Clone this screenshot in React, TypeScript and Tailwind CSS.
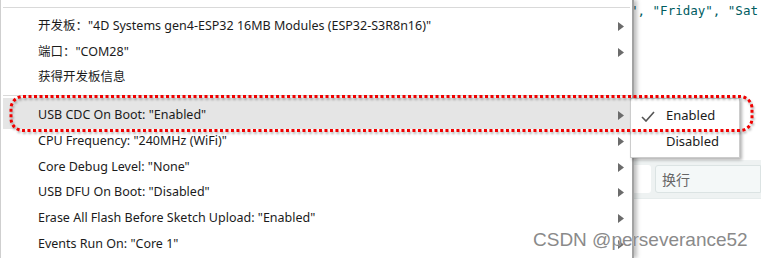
import React from "react"

type Item = { label: string; sub: boolean; active?: boolean; h: number }

const topItems: Item[] = [
    { label: '开发板："4D Systems gen4-ESP32 16MB Modules (ESP32-S3R8n16)"', sub: true, h: 26 },
    { label: '端口："COM28"', sub: true, h: 26 },
    { label: "获得开发板信息", sub: false, h: 25 },
]

const boardItems: Item[] = [
    { label: 'USB CDC On Boot: "Enabled"', sub: true, active: true, h: 31 },
    { label: 'CPU Frequency: "240MHz (WiFi)"', sub: true, h: 25 },
    { label: 'Core Debug Level: "None"', sub: true, h: 26 },
    { label: 'USB DFU On Boot: "Disabled"', sub: true, h: 25 },
    { label: 'Erase All Flash Before Sketch Upload: "Enabled"', sub: true, h: 26 },
    { label: 'Events Run On: "Core 1"', sub: true, h: 26 },
]

function Arrow() {
    return (
        <svg width="6" height="9" viewBox="0 0 6 9" className="absolute right-[8px]">
            <path d="M0 0 L6 4.5 L0 9 Z" fill="#6b6b6b" />
        </svg>
    )
}

function Row({ item }: { item: Item }) {
    return (
        <div
            className={`relative flex items-center shrink-0 pl-[35px] ${item.active ? "bg-[#e5e5e5] pt-[3px]" : ""}`}
            style={{ height: item.h }}
        >
            <span className="text-[12.5px] text-[#1b1b1b] whitespace-nowrap">{item.label}</span>
            {item.sub && <Arrow />}
        </div>
    )
}

export default function App() {
    return (
        <div
            className="relative w-[761px] h-[258px] overflow-hidden bg-white flex"
            style={{ fontFamily: '"Noto Sans", "Noto Sans CJK SC", sans-serif' }}
        >
            {/* main menu */}
            <div className="relative z-10 w-[634px] h-full bg-white border-l border-[#cfcfcf] border-r-2 border-r-[#a3a3a3] shadow-[3px_0_4px_rgba(0,0,0,0.25)] flex flex-col pl-[2px]">
                <div className="h-[7px] shrink-0" />
                <div className="h-px bg-[#d9d9d9] mr-[2px] shrink-0" />
                <div className="h-[5px] shrink-0" />
                {topItems.map((it) => (
                    <Row key={it.label} item={it} />
                ))}
                <div className="h-[8px] shrink-0 flex items-start pt-[5px]">
                    <div className="h-px w-full bg-[#d9d9d9]" />
                </div>
                {boardItems.map((it) => (
                    <Row key={it.label} item={it} />
                ))}
            </div>

            {/* editor behind */}
            <div className="flex-1 flex flex-col min-w-0">
                <div className="h-[22px] pt-[2px] overflow-hidden">
                    <div
                        className="-ml-[4px] whitespace-nowrap text-[12.5px] text-[#005c5f]"
                        style={{ fontFamily: '"DejaVu Sans Mono", monospace' }}
                    >
                        ", "Friday", "Sat
                    </div>
                </div>
                <div className="h-[138px] shrink-0" />
                <div className="h-[38px] bg-[#eef2f2] flex items-center gap-[4px] pr-0">
                    <div className="w-[17px] h-[28px] bg-white rounded-r-[3px]" />
                    <div className="flex-1 h-[28px] bg-[#f4f8f8] border border-[#dbe3e3] rounded-l-[3px] flex items-center pl-[6px]">
                        <span className="text-[14px] text-[#666]" style={{ fontFamily: '"Noto Sans CJK SC", sans-serif' }}>换行</span>
                    </div>
                </div>
                <div className="flex-1 bg-white border-t border-[#e6ecec]" />
            </div>

            {/* submenu */}
            <div className="absolute z-20 left-[630px] top-[98px] w-[110px] h-[60px] bg-white border border-[#cccccc] shadow-[2px_2px_3px_rgba(0,0,0,0.3)] flex flex-col pt-[3px]">
                <div className="h-[28px] flex items-center">
                    <svg width="14" height="11" viewBox="0 0 14 11" className="ml-[10px]">
                        <path d="M1 6 L5 10 L13 1" fill="none" stroke="#555" strokeWidth="1.6" />
                    </svg>
                    <span className="ml-[11px] text-[13px] text-[#1b1b1b]">Enabled</span>
                </div>
                <div className="h-[24px] flex items-center pl-[35px]">
                    <span className="text-[13px] text-[#1b1b1b]">Disabled</span>
                </div>
            </div>

            {/* red annotation */}
            <svg className="absolute z-30 left-[8px] top-[94px] drop-shadow-[1px_2px_1px_rgba(0,0,0,0.3)]" width="748" height="40">
                <rect x="3" y="2.5" width="741" height="34" rx="12" fill="none" stroke="#f00000" strokeWidth="3" strokeDasharray="3 2.5" />
            </svg>

            {/* watermark */}
            <div
                className="absolute z-40 left-[533px] top-[226px] text-[19px] text-[#8a8a8a] whitespace-nowrap [text-shadow:0_0_1px_#fff]"
                style={{ fontFamily: '"Liberation Sans", Arial, sans-serif' }}
            >
                CSDN @perseverance52
            </div>
        </div>
    )
}
